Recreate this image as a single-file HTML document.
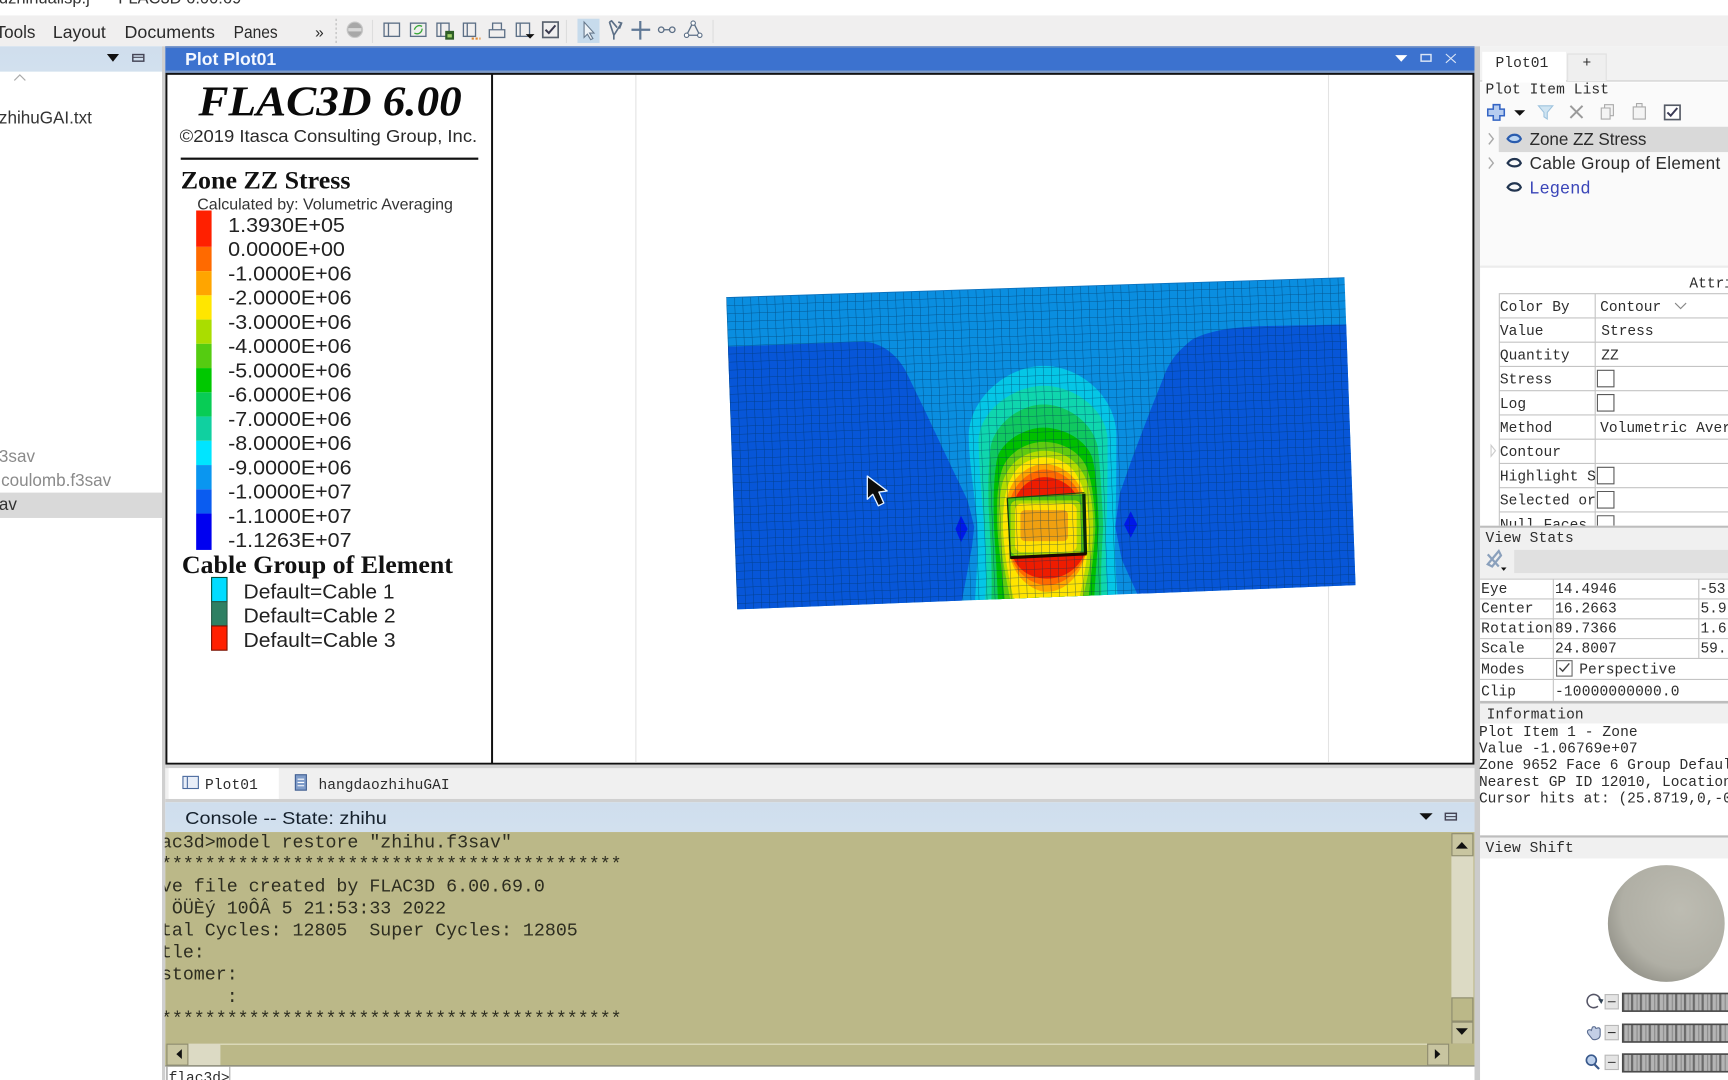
<!DOCTYPE html>
<html lang="en"><head><meta charset="utf-8"><title>FLAC3D 6.00</title>
<style>
html,body{margin:0;padding:0;background:#fff;overflow:hidden;width:1728px;height:1080px}
svg{display:block;filter:blur(.35px)}
text{white-space:pre}
.s{font-family:"Liberation Sans",sans-serif}
.m{font-family:"Liberation Mono",monospace;font-size:13.2px;fill:#2c2c2c}
.c{font-family:"Liberation Mono",monospace;font-size:16.6px;fill:#2d2d20}
.h{font-family:"Liberation Serif",serif;font-weight:bold;font-size:23px;fill:#111}
.l{font-family:"Liberation Sans",sans-serif;font-size:18.5px;fill:#222}
.i{fill:none;stroke:#5c6f86;stroke-width:1.2}
</style></head><body>
<svg xmlns="http://www.w3.org/2000/svg" width="1728" height="1080" viewBox="0 0 1568 980">
<defs>
<clipPath id="mesh"><path d="M659 270L1220 252L1230 531L669 553Z"/></clipPath>
<clipPath id="con"><rect x="149.500" y="755" width="1167" height="192"/></clipPath>
<clipPath id="tun"><path d="M914 452L984 448L985 503L917 507Z"/></clipPath>
<clipPath id="tbl"><rect x="1343" y="265" width="225" height="212"/></clipPath>
<pattern id="g" width="7.3" height="7.3" patternUnits="userSpaceOnUse" patternTransform="matrix(1 -.034 .036 1 659 270)"><path d="M0 0H7.3M0 0V7.3" stroke="#00305a" stroke-opacity=".6" stroke-width=".9" fill="none"/></pattern>
<pattern id="st" width="8" height="16" patternUnits="userSpaceOnUse"><rect width="8" height="16" fill="#b4b4b4"/><rect x="0" width="2" height="16" fill="#6a6a6a"/><rect x="5" width="1" height="16" fill="#8a8a8a"/></pattern>
<radialGradient id="sp" cx=".62" cy=".38" r=".72"><stop offset="0" stop-color="#bdbcb2"/><stop offset=".7" stop-color="#b0afa5"/><stop offset="1" stop-color="#8f8e85"/></radialGradient>
<linearGradient id="gb" x1="0" y1="0" x2="0" y2="1"><stop offset="0" stop-color="#cfdeed"/><stop offset="1" stop-color="#d2e0ee"/></linearGradient>
</defs>

<rect width="1568" height="980" fill="#fff"/>
<text x="-1" y="3" class="s" font-size="15" fill="#333">dzhihuallsp.j   -  FLAC3D 6.00.69</text>

<!-- toolbar -->
<rect y="14" width="1568" height="28" fill="#f0efef"/>
<g class="s" font-size="15.5" fill="#2a2a2a">
<text x="-4" y="34.500">Tools</text><text x="48" y="34.500" textLength="48" lengthAdjust="spacingAndGlyphs">Layout</text><text x="113" y="34.500" textLength="82" lengthAdjust="spacingAndGlyphs">Documents</text><text x="212" y="34.500" textLength="40" lengthAdjust="spacingAndGlyphs">Panes</text><text x="286" y="34" font-size="14">»</text></g>
<path d="M305 17V40" stroke="#b8b8b8" stroke-dasharray="2 2"/>
<circle cx="322" cy="27" r="7" fill="#a8a8a8" stroke="#c8c8c8"/><path d="M316 27h12" stroke="#d8d8d8" stroke-width="3"/>
<path d="M338 18V39M514 18V39M647 18V39" stroke="#ddd"/>
<g class="i">
<rect x="348.500" y="21" width="14" height="12"/><path d="M352.500 21V33"/>
<rect x="372.500" y="21" width="14" height="12"/><path d="M376 30c4 2 7-1 7-4M383 24c-3-2-6 0-7 3" stroke="#38a838"/>
<rect x="396.500" y="21" width="11" height="12"/><path d="M400 21V33"/>
<rect x="420.500" y="21" width="11" height="12"/><path d="M424 21V33"/>
<path d="M447 21h8v6h-8zM444 27h14v7h-14z"/>
<rect x="468.500" y="21" width="12" height="12"/><path d="M472 21V33"/>
<rect x="492.500" y="20" width="14" height="14" stroke="#59616d" stroke-width="1.500"/></g>
<rect x="404" y="28" width="8" height="8" fill="#2f5f27"/><rect x="406" y="31" width="4" height="3" fill="#9fd069"/>
<path d="M428 35h8" stroke="#e08830" stroke-dasharray="2 1.500" stroke-width="2"/>
<path d="M477 31h8l-4 4z" fill="#111"/><path d="M495 27l3 3 6-7" fill="none" stroke="#3b3b4f" stroke-width="1.800"/>
<rect x="524" y="17" width="20" height="22" fill="#c7dbec"/>
<path d="M530 20V34l3-3 3 5 2-1-3-5h4z" fill="#eef3f7" stroke="#66788c"/>
<path d="M553 20l4 12 7-11M553 20l2-1 5 6M561 20l3 1-2 5M557 32v4" fill="none" stroke="#5c6f86" stroke-width="1.500"/>
<path d="M581 19V36M573 27H590" stroke="#5f7896" stroke-width="2"/>
<circle cx="600" cy="27" r="2.500" class="i"/><circle cx="610" cy="27" r="2.500" class="i"/><path d="M602 27h6" class="i"/>
<path d="M629 20L623 32H635Z" class="i"/><circle cx="629" cy="21" r="2" fill="#fff" stroke="#5c6f86"/><circle cx="623" cy="32" r="2" fill="#fff" stroke="#5c6f86"/><circle cx="635" cy="32" r="2" fill="#fff" stroke="#5c6f86"/>

<!-- left panel -->
<rect y="42" width="147" height="23" fill="url(#gb)"/>
<path d="M97 49h11l-5.500 7z" fill="#111"/><rect x="120.500" y="49.500" width="10" height="6" fill="none" stroke="#445" stroke-width="1.300"/><path d="M121 52h9" stroke="#445"/>
<path d="M13 73l5-5 5 5" fill="none" stroke="#aaa"/>
<text x="-1" y="112" class="s" font-size="15.500" fill="#333">zhihuGAI.txt</text>
<text x="-1" y="419" class="s" font-size="15.500" fill="#8a8a8a">3sav</text>
<text x="1" y="441" class="s" font-size="15.500" fill="#8a8a8a">coulomb.f3sav</text>
<rect y="447" width="147" height="23" fill="#d9d9d9"/>
<text x="-1" y="463" class="s" font-size="15.500" fill="#333">av</text>
<rect x="147" y="42" width="3" height="938" fill="#cfcfcf"/>

<!-- plot title -->
<rect x="150" y="42" width="1188" height="24" fill="#3c72cf"/><rect x="150" y="42" width="1188" height="1.500" fill="#6a8bc4"/><rect x="150" y="64" width="1188" height="2" fill="#7f9cc9"/>
<text x="168" y="59" class="s" font-size="16" font-weight="bold" fill="#f4f8ff">Plot Plot01</text>
<path d="M1266 50h11l-5.500 6z" fill="#fff"/><rect x="1289.500" y="49.500" width="9" height="6" fill="none" stroke="#dce6f6" stroke-width="1.300"/><path d="M1312 49l9 8M1321 49l-9 8" stroke="#dce6f6"/>

<!-- plot view -->
<rect x="151" y="67" width="1186" height="626" fill="#fff" stroke="#111" stroke-width="1.800"/>
<path d="M446.500 67V693" stroke="#111" stroke-width="1.800"/>
<path d="M577 68V692M1205.500 68V692" stroke="#e3e3e3"/>

<!-- legend -->
<text x="180" y="105" font-family="Liberation Serif,serif" font-weight="bold" font-style="italic" font-size="38" fill="#0a0a0a" textLength="239" lengthAdjust="spacingAndGlyphs">FLAC3D 6.00</text>
<text x="163" y="129" class="s" font-size="16" fill="#2a2a2a" textLength="270" lengthAdjust="spacingAndGlyphs">©2019 Itasca Consulting Group, Inc.</text>
<rect x="164" y="143" width="270" height="2" fill="#111"/>
<text x="164" y="171" class="h" textLength="154" lengthAdjust="spacingAndGlyphs">Zone ZZ Stress</text>
<text x="179" y="190" class="s" font-size="14.300" fill="#333" textLength="232" lengthAdjust="spacingAndGlyphs">Calculated by: Volumetric Averaging</text>
<rect x="178" y="191" width="14" height="33" fill="#ff2000"/><rect x="178" y="224" width="14" height="22" fill="#ff6a00"/><rect x="178" y="246" width="14" height="22" fill="#ffa500"/><rect x="178" y="268" width="14" height="22" fill="#ffe600"/><rect x="178" y="290" width="14" height="22" fill="#aadd00"/><rect x="178" y="312" width="14" height="22" fill="#55cc11"/><rect x="178" y="334" width="14" height="22" fill="#00c800"/><rect x="178" y="356" width="14" height="22" fill="#08cc55"/><rect x="178" y="378" width="14" height="22" fill="#10d0a0"/><rect x="178" y="400" width="14" height="22" fill="#00e5ff"/><rect x="178" y="422" width="14" height="22" fill="#0a96f0"/><rect x="178" y="444" width="14" height="22" fill="#0a5cf0"/><rect x="178" y="466" width="14" height="33" fill="#0000f0"/>
<g class="l">
<text x="207" y="210.500" textLength="106" lengthAdjust="spacingAndGlyphs">1.3930E+05</text><text x="207" y="232.500" textLength="106" lengthAdjust="spacingAndGlyphs">0.0000E+00</text>
<text x="207" y="254.500" textLength="112" lengthAdjust="spacingAndGlyphs">-1.0000E+06</text><text x="207" y="276.500" textLength="112" lengthAdjust="spacingAndGlyphs">-2.0000E+06</text><text x="207" y="298.500" textLength="112" lengthAdjust="spacingAndGlyphs">-3.0000E+06</text><text x="207" y="320.500" textLength="112" lengthAdjust="spacingAndGlyphs">-4.0000E+06</text><text x="207" y="342.500" textLength="112" lengthAdjust="spacingAndGlyphs">-5.0000E+06</text><text x="207" y="364.500" textLength="112" lengthAdjust="spacingAndGlyphs">-6.0000E+06</text><text x="207" y="386.500" textLength="112" lengthAdjust="spacingAndGlyphs">-7.0000E+06</text><text x="207" y="408.500" textLength="112" lengthAdjust="spacingAndGlyphs">-8.0000E+06</text><text x="207" y="430.500" textLength="112" lengthAdjust="spacingAndGlyphs">-9.0000E+06</text><text x="207" y="452.500" textLength="112" lengthAdjust="spacingAndGlyphs">-1.0000E+07</text><text x="207" y="474.500" textLength="112" lengthAdjust="spacingAndGlyphs">-1.1000E+07</text><text x="207" y="496.500" textLength="112" lengthAdjust="spacingAndGlyphs">-1.1263E+07</text>
<text x="221" y="543" textLength="137" lengthAdjust="spacingAndGlyphs">Default=Cable 1</text><text x="221" y="565" textLength="138" lengthAdjust="spacingAndGlyphs">Default=Cable 2</text><text x="221" y="587" textLength="138" lengthAdjust="spacingAndGlyphs">Default=Cable 3</text></g>
<text x="165" y="520" class="h" textLength="246" lengthAdjust="spacingAndGlyphs">Cable Group of Element</text>
<rect x="192" y="524" width="14" height="22" fill="#00dcff" stroke="#054" stroke-width="1"/><rect x="192" y="546" width="14" height="22" fill="#2f8063" stroke="#2a5a48" stroke-width="1"/><rect x="192" y="568" width="14" height="22" fill="#ff2000" stroke="#7a1000" stroke-width="1"/>

<!-- mesh -->
<g clip-path="url(#mesh)">
<rect x="650" y="240" width="600" height="330" fill="#0a8ee0"/>
<path d="M650 315L784 310C800 311 815 322 823 339L839 372L863 423L878 454L884 478L882 496L877 523L870 560H650Z" fill="#0756d8"/>
<path d="M1240 294L1142 296C1115 297 1095 301 1082 308C1072 316 1062 325 1056 342L1044 372L1028 414L1016 448L1012 478L1018 508L1032 539L1040 560H1240Z" fill="#0756d8"/>
<path d="M884 560C886 520 888 500 887 478C885 450 879 420 879 395C880 360 915 332 947 332C980 332 1013 360 1013 395C1013 420 1013 450 1012 478C1011 500 1012 520 1016 560Z" fill="#05c6e6"/>
<path d="M893 560C896 520 895 500 893 478C891 450 888 420 888 398C890 372 920 350 947 350C975 350 1004 372 1005 398C1005 420 1005 450 1004 478C1003 500 1003 520 1007 560Z" fill="#0fd6ae"/>
<path d="M899 560C901 520 899 500 898 478C896 450 897 420 899 405C903 385 925 367 947 367C970 367 992 385 996 405C998 420 1000 450 1001 478C1000 500 998 520 1000 560Z" fill="#10c860"/>
<path d="M906 560C905 520 903 500 902 478C901 450 902 430 905 415C910 400 930 388 947 388C966 388 986 400 991 415C995 430 996 450 997 478C996 500 994 520 992 560Z" fill="#00bf00"/>
<path d="M913 560C910 520 906 500 905 478C904 450 906 435 910 424C916 410 932 401 947 401C964 401 980 410 986 424C990 435 993 450 994 478C993 500 990 520 986 560Z" fill="#5fca10"/>
<path d="M917 545C912 520 908 500 907 478C906 455 908 438 913 430C920 416 934 409 948 409C962 409 976 416 983 430C988 438 992 455 992 478C992 500 988 520 982 545Z" fill="#b4dc00"/>
<path d="M921 548C915 525 911 500 910 478C910 456 913 442 917 435C923 421 936 415 948 415C960 415 973 421 979 435C983 442 988 456 988 478C988 500 984 525 978 548Z" fill="#ffe400"/>
<path d="M914 453C916 435 932 421 948 421C964 421 980 435 983 450Z" fill="#ffa400"/>
<path d="M917 453C920 440 934 426 948 426C962 426 977 438 980 450Z" fill="#ff6a00"/>
<path d="M921 453C926 441 936 433 948 433C960 433 972 440 977 450Z" fill="#ee1c00"/>
<path d="M917 506C921 525 938 537 950 537C966 537 981 522 985 503Z" fill="#ffa400"/>
<path d="M918 506C922 521 938 531 950 531C965 531 979 519 985 503Z" fill="#ff6a00"/>
<path d="M919 505C924 518 936 525 950 525C966 525 978 516 984 503Z" fill="#ee1c00"/>
<path d="M914 452L984 448L985 503L917 507Z" fill="#48be10"/>
<g clip-path="url(#tun)"><rect x="917" y="454" width="64" height="50" rx="6" fill="#aed800"/><rect x="921" y="457" width="56" height="44" rx="6" fill="#ffe000"/><rect x="926" y="463" width="43" height="25" rx="4" fill="#f0a010"/><rect x="926" y="463" width="43" height="28" rx="4" fill="#f0a010"/></g>
<path d="M872 468l6 12-6 12-5-12zM1026 464l6 12-6 12-6-12z" fill="#0018e8"/>
<rect x="640" y="230" width="620" height="340" fill="url(#g)"/>
</g>
<path d="M914 452L984 447" stroke="#124a10" stroke-width="1"/><path d="M914 452L917 507" stroke="#123a10" stroke-width="1.200"/>
<path d="M983.500 448L985 503" stroke="#082808" stroke-width="3"/><path d="M917 506L986 502.500" stroke="#1c0a00" stroke-width="2.800"/>
<path d="M659 270L1220 252" stroke="#0a72c0" stroke-width=".8"/>
<path d="M787 432V453L792 448.500L797 459L802 456.500L797.500 446.500L805 445.500Z" fill="#0c0c0c" stroke="#e8f4ff" stroke-width="1.200" stroke-linejoin="round"/>

<!-- tabs -->
<rect x="150" y="694" width="1188" height="33" fill="#f0f0f0"/><rect x="150" y="694" width="1188" height="3" fill="#d2d2d2"/>
<rect x="153" y="697" width="100" height="30" fill="#fff"/>
<rect x="166" y="704.500" width="14" height="11" fill="#e8eef8" stroke="#4a6a9e"/><path d="M170 705V715" stroke="#4a6a9e"/>
<text x="186" y="716" class="m" textLength="48">Plot01</text>
<rect x="268" y="703" width="10" height="14" fill="#7f9cc9" stroke="#3e5c90"/><path d="M270 707h6M270 710h6M270 713h6" stroke="#fff"/>
<text x="289" y="716" class="m" textLength="119">hangdaozhihuGAI</text>
<rect x="150" y="725" width="1188" height="3" fill="#d0d0d0"/>

<!-- console -->
<rect x="150" y="728" width="1188" height="27" fill="url(#gb)"/>
<text x="168" y="747.500" class="s" font-size="16" fill="#15202b" textLength="183" lengthAdjust="spacingAndGlyphs">Console -- State: zhihu</text>
<path d="M1288 738h12l-6 6z" fill="#111"/><rect x="1311.500" y="738" width="10" height="6" fill="none" stroke="#445" stroke-width="1.300"/><path d="M1312 741h9" stroke="#445"/>
<rect x="150" y="755" width="1188" height="212" fill="#bbb888"/>
<g clip-path="url(#con)" class="c">
<text x="146" y="769">ac3d&gt;model restore "zhihu.f3sav"</text>
<text x="146" y="789">******************************************</text>
<text x="146" y="809">ve file created by FLAC3D 6.00.69.0</text>
<text x="146" y="829"> ÖÜÈý 10ÔÂ 5 21:53:33 2022</text>
<text x="146" y="849">tal Cycles: 12805  Super Cycles: 12805</text>
<text x="146" y="869">tle:</text>
<text x="146" y="889">stomer:</text>
<text x="146" y="909">      :</text>
<text x="146" y="929">******************************************</text>
</g>
<!-- scrollbars -->
<rect x="1317" y="776" width="20" height="129" fill="#dcdac4"/>
<rect x="1317.500" y="756.500" width="19" height="20" fill="#c8c5a0" stroke="#8d8b6e"/><path d="M1321 770h11l-5.500-6z" fill="#111"/>
<rect x="1317.500" y="905.500" width="19" height="21" fill="#bbb888" stroke="#8d8b6e"/>
<rect x="1317.500" y="927.500" width="19" height="20" fill="#c8c5a0" stroke="#8d8b6e"/><path d="M1321 933h11l-5.500 6z" fill="#111"/>
<rect x="150" y="947" width="1188" height="20" fill="#bbb888"/><path d="M200 947.500H1295" stroke="#e4e2c8"/>
<rect x="151.500" y="947.500" width="19" height="19" fill="#c8c5a0" stroke="#8d8b6e"/><path d="M165 952v9l-5-4.500z" fill="#111"/>
<rect x="171" y="947" width="29" height="20" fill="#dcdac4"/>
<rect x="1295.500" y="947.500" width="19" height="19" fill="#c8c5a0" stroke="#8d8b6e"/><path d="M1302 952v9l5-4.500z" fill="#111"/>
<rect x="150" y="966.500" width="1188" height="1.500" fill="#8d8d7c"/>
<rect x="150" y="968" width="1188" height="12" fill="#fff"/>
<path d="M208.500 968V980" stroke="#aaa"/><path d="M151.500 968V980" stroke="#888"/>
<text x="153" y="982" class="m">flac3d&gt;</text>

<!-- right panel -->
<rect x="1338" y="42" width="5" height="938" fill="#cbcbcb"/>
<rect x="1343" y="42" width="225" height="32" fill="#f2f2f2"/>
<path d="M1343 73.500H1568" stroke="#c6c6c6"/>
<rect x="1345" y="47" width="76" height="28" fill="#fff"/>
<rect x="1422.500" y="49" width="35" height="25" fill="#efefef" stroke="#e0e0e0"/>
<text x="1357" y="61" class="m" textLength="48">Plot01</text><text x="1436" y="61" class="m">+</text>
<rect x="1343" y="75" width="225" height="166" fill="#fafafa"/>
<text x="1348" y="85" class="m" textLength="112">Plot Item List</text>
<path d="M1355 95h6v4h4v6h-4v4h-6v-4h-5v-6h5z" fill="#b7cdf0" stroke="#3565c4" stroke-width="1.400"/>
<path d="M1374 100h10l-5 5z" fill="#111"/>
<path d="M1396 96h13l-5 6v6l-3-2v-4z" fill="#cfe4f2" stroke="#9ec3de"/>
<path d="M1425 96l11 11M1436 96l-11 11" stroke="#9a9a9a" stroke-width="1.800"/>
<path d="M1453 98h8v10h-8zM1456 98v-3h8v10h-3" fill="#f4f4f4" stroke="#aaa"/>
<path d="M1482 97h11v11h-11zM1485 97v-3h5v3" fill="#f4f4f4" stroke="#aaa"/>
<rect x="1510.500" y="95.500" width="14" height="13" fill="#fff" stroke="#555b66" stroke-width="1.500"/><path d="M1513 102l3 3 6-7" fill="none" stroke="#3a3a55" stroke-width="1.800"/>
<rect x="1360" y="115" width="208" height="23" fill="#d9d9d9"/>
<path d="M1351 121l4 5-4 5M1351 143l4 5-4 5" fill="none" stroke="#aaa" stroke-width="1.300"/>
<g fill="none" stroke-width="2"><path d="M1368 126c3-5 10-5 12 0c-2 4-9 4-12 0z" stroke="#2a5cae" fill="#bcd6f2"/><path d="M1368 148c3-5 10-5 12 0c-2 4-9 4-12 0z" stroke="#223550"/><path d="M1368 170c3-5 10-5 12 0c-2 4-9 4-12 0z" stroke="#223550"/></g>
<text x="1388" y="131.500" class="s" font-size="15.500" fill="#2b2b2b" textLength="106">Zone ZZ Stress</text>
<text x="1388" y="153.500" class="s" font-size="15.500" fill="#2b2b2b" textLength="173">Cable Group of Element</text>
<text x="1388" y="175.500" class="s" font-size="15.500" fill="#3a45b8" textLength="55">Legend</text>
<rect x="1343" y="241" width="225" height="2" fill="#ececec"/>
<text x="1533" y="261" class="m">Attri</text>
<g clip-path="url(#tbl)">
<path d="M1360 266.500H1568M1360 288.500H1568M1360 310.500H1568M1360 332.500H1568M1360 354.500H1568M1360 376.500H1568M1360 398.500H1568M1360 420.500H1568M1360 442.500H1568M1360 464.500H1568M1360.500 266V478M1447.500 266V478" stroke="#c4c4c4" fill="none"/>
<g class="m">
<text x="1361" y="282">Color By</text><text x="1361" y="304">Value</text><text x="1361" y="326">Quantity</text><text x="1361" y="348">Stress</text><text x="1361" y="370">Log</text><text x="1361" y="392">Method</text><text x="1361" y="414">Contour</text><text x="1361" y="436">Highlight S</text><text x="1361" y="458">Selected or</text><text x="1361" y="480">Null Faces</text>
<text x="1452" y="282">Contour</text><text x="1453" y="304">Stress</text><text x="1453" y="326">ZZ</text><text x="1452" y="392">Volumetric Aver</text></g>
<path d="M1520 275l5 5 5-5" fill="none" stroke="#888"/>
<path d="M1449.500 336h15v15h-15zM1449.500 358h15v15h-15zM1449.500 424h15v15h-15zM1449.500 446h15v15h-15zM1449.500 468h15v15h-15z" fill="#fff" stroke="#5a5a5a"/>
<path d="M1353 404l4 5-4 5z" fill="#fff" stroke="#ccc"/>
</g>
<rect x="1343" y="477" width="225" height="2" fill="#bdbdbd"/>
<rect x="1343" y="479" width="225" height="46" fill="#f0f0f0"/>
<text x="1348" y="492" class="m" textLength="80">View Stats</text>
<rect x="1374" y="499" width="194" height="21" fill="#e0e0e0"/>
<path d="M1350 512l10-12 2 4-8 10zM1350 503l10 11" stroke="#8aa0bc" stroke-width="2" fill="none"/><path d="M1362 515h5l-2.500 3z" fill="#111"/>
<rect x="1343" y="525" width="225" height="111" fill="#fff"/>
<path d="M1343 525.500H1568M1343 543.500H1568M1343 561.500H1568M1343 579.500H1568M1343 597.500H1568M1343 616.500H1568M1409.500 525V636M1541.500 525V597" stroke="#c4c4c4" fill="none"/>
<g class="m">
<text x="1344" y="538">Eye</text><text x="1344" y="556">Center</text><text x="1344" y="574" textLength="65">Rotation</text><text x="1344" y="592">Scale</text><text x="1344" y="611">Modes</text><text x="1344" y="631">Clip</text>
<text x="1411" y="538" textLength="56">14.4946</text><text x="1411" y="556" textLength="56">16.2663</text><text x="1411" y="574" textLength="56">89.7366</text><text x="1411" y="592" textLength="56">24.8007</text>
<text x="1433" y="611" textLength="88">Perspective</text><text x="1411" y="631" textLength="113">-10000000000.0</text>
<text x="1542" y="538">-53</text><text x="1543" y="556">5.9</text><text x="1543" y="574">1.6</text><text x="1543" y="592">59.</text></g>
<rect x="1412.500" y="599.500" width="14" height="14" fill="#fff" stroke="#666"/><path d="M1415 606l3 3 6-7" fill="none" stroke="#444" stroke-width="1.300"/>
<rect x="1343" y="636" width="225" height="2.500" fill="#bdbdbd"/>
<rect x="1343" y="638.500" width="225" height="18" fill="#f0f0f0"/>
<text x="1349" y="652" class="m" textLength="88">Information</text>
<g class="m">
<text x="1342" y="668" textLength="144">Plot Item 1 - Zone</text><text x="1342" y="683" textLength="144">Value -1.06769e+07</text><text x="1342" y="698">Zone 9652 Face 6 Group Default</text><text x="1342" y="713">Nearest GP ID 12010, Location</text><text x="1342" y="728">Cursor hits at: (25.8719,0,-0.5</text></g>
<rect x="1343" y="758" width="225" height="2.500" fill="#bdbdbd"/>
<rect x="1343" y="760" width="225" height="19" fill="#f0f0f0"/>
<text x="1348" y="773" class="m" textLength="80">View Shift</text>
<circle cx="1512" cy="838" r="53" fill="url(#sp)"/>
<path d="M1450 913a6 6 0 1 1 2-6" fill="none" stroke="#556" stroke-width="1.400"/><path d="M1450 906l5 1-2 4z" fill="#345"/>
<path d="M1441 938c-2-4 2-4 3-3l1-3c2-1 3 0 3 1s3-2 4 1v5c0 4-5 5-7 4z" fill="#c3cfe6" stroke="#5a6c90"/>
<circle cx="1444" cy="962" r="4.500" fill="#bcd0ec" stroke="#39598c" stroke-width="1.500"/><path d="M1447 966l4 4" stroke="#39598c" stroke-width="2"/>
<g fill="#e4e4e4" stroke="#b8b8b8"><rect x="1456.500" y="902.500" width="12" height="13"/><rect x="1456.500" y="930.500" width="12" height="13"/><rect x="1456.500" y="957.500" width="12" height="13"/></g>
<path d="M1459 909h7M1459 937h7M1459 964h7" stroke="#333"/>
<g stroke="#4a4a4a" stroke-width="1.500" fill="url(#st)"><rect x="1472.500" y="901.500" width="100" height="16"/><rect x="1472.500" y="929.500" width="100" height="16"/><rect x="1472.500" y="956.500" width="100" height="16"/></g>
</svg>
</body></html>
